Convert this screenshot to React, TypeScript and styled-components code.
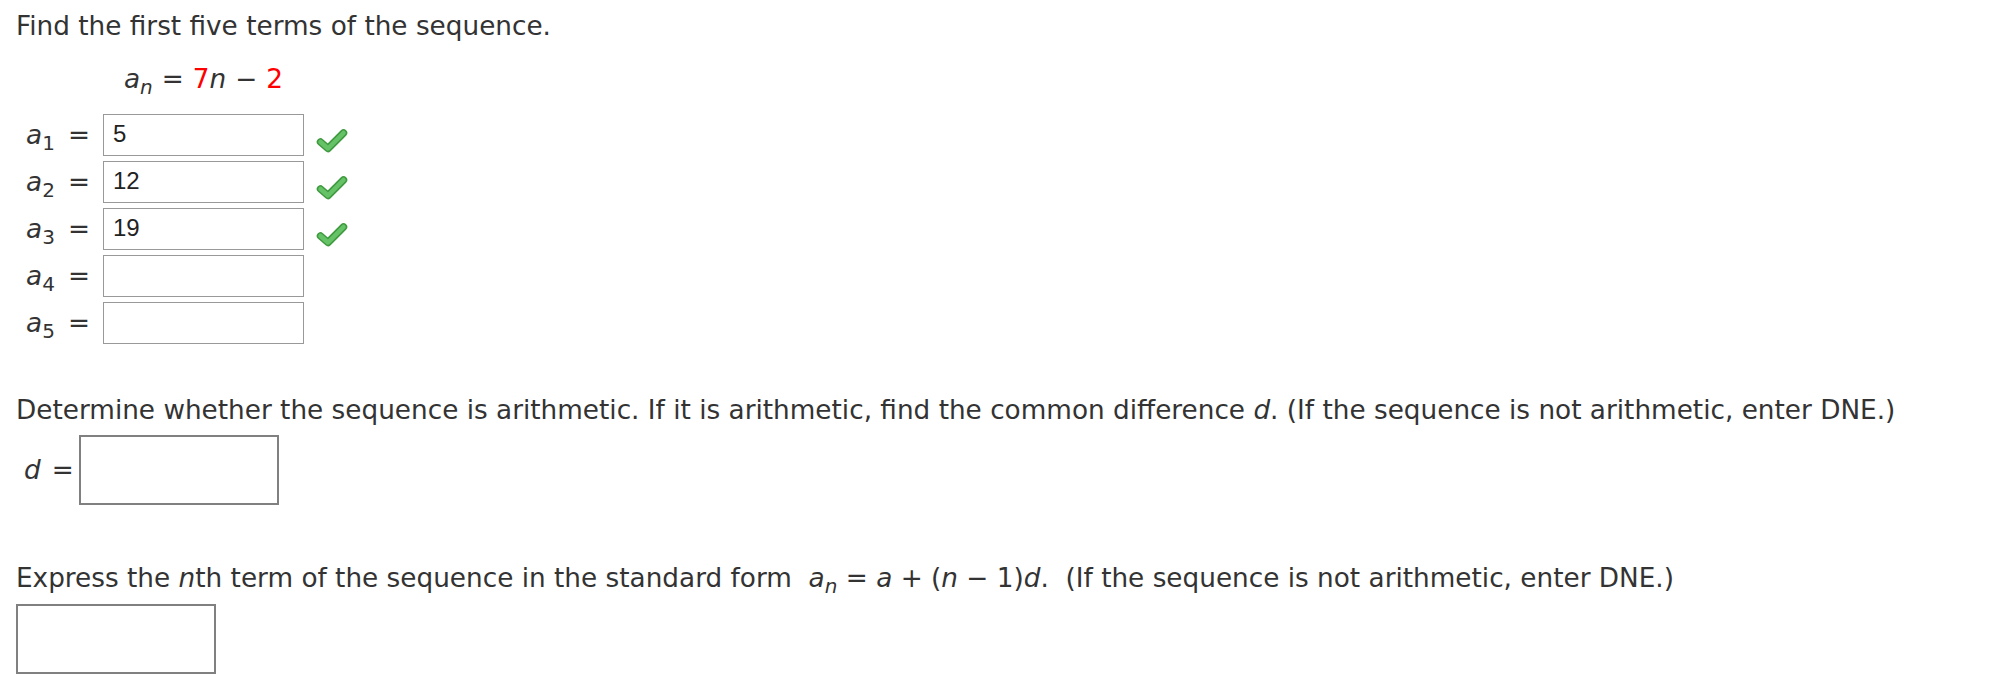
import * as React from 'react';
import styled, { createGlobalStyle } from 'styled-components';

const GlobalStyle = createGlobalStyle`
  html, body {
    margin: 0;
    padding: 0;
    background: #fff;
  }
  body {
    font-family: 'DejaVu Sans', Verdana, sans-serif;
    font-size: 26.3px;
    color: #333;
  }
`;

const Page = styled.div`
  padding: 11px 0 0 16px;
`;

const Prompt = styled.p<{ $top?: number }>`
  margin: ${(p) => p.$top ?? 0}px 0 0;
  line-height: 30px;
  white-space: pre;
`;

const V = styled.i`
  font-style: italic;
`;

const Sub = styled.sub`
  font-size: 20px;
  vertical-align: -6px;
  line-height: 0;
`;

const Red = styled.span`
  color: #f00;
`;

const Op = styled.span`
  margin: 0 9px;
`;

const TermsGrid = styled.div`
  display: grid;
  grid-template-columns: 42px 35px 201px 50px;
  row-gap: 5px;
  margin-left: 10px;
  align-items: center;
`;

const FormulaCell = styled.div`
  grid-column: 3;
  text-align: center;
  line-height: 38px;
  padding: 19px 0 11px;
  white-space: nowrap;
`;

const Label = styled.div`
  grid-column: 1;
  line-height: 42px;
  white-space: nowrap;
`;

const Eq = styled.div`
  line-height: 42px;
`;

const SmallBox = styled.div`
  box-sizing: border-box;
  height: 42px;
  border: 1px solid #999;
  padding-left: 9px;
  font-family: 'Liberation Sans', Arial, sans-serif;
  font-size: 24px;
  line-height: 38px;
  color: #222;
`;

const CheckCell = styled.div`
  padding: 9px 0 0 12px;
  height: 24px;
`;

const DRow = styled.div`
  display: flex;
  align-items: center;
  margin: 10px 0 0 8px;
`;

const DLabel = styled.span`
  margin-right: 11px;
`;

const BigBox = styled.div`
  box-sizing: border-box;
  width: 200px;
  height: 70px;
  border: 2px solid #808080;
  background: #fff;
`;

const DBox = styled(BigBox)`
  margin-left: 5px;
`;

const AnswerBox = styled(BigBox)`
  margin-top: 11px;
`;

const Check = () => (
  <svg width="32" height="25" viewBox="0 0 32 25">
    <path d="M4.5 14 L12 20.5 L27.5 5" fill="none" stroke="#3f9a3f" strokeWidth="7.5" strokeLinecap="round" strokeLinejoin="round" />
    <path d="M4.5 14 L12 20.5 L27.5 5" fill="none" stroke="#66c266" strokeWidth="4.5" strokeLinecap="round" strokeLinejoin="round" />
  </svg>
);

const terms = [
  { i: 1, value: '5', ok: true },
  { i: 2, value: '12', ok: true },
  { i: 3, value: '19', ok: true },
  { i: 4, value: '', ok: false },
  { i: 5, value: '', ok: false },
];

export default function App() {
  return (
    <Page>
      <GlobalStyle />
      <Prompt>Find the first five terms of the sequence.</Prompt>

      <TermsGrid>
        <FormulaCell>
          <V>a</V>
          <Sub>
            <V>n</V>
          </Sub>
          <Op>=</Op>
          <Red>7</Red>
          <V>n</V>
          <Op>−</Op>
          <Red>2</Red>
        </FormulaCell>
        {terms.map((t) => (
          <React.Fragment key={t.i}>
            <Label>
              <V>a</V>
              <Sub>{t.i}</Sub>
            </Label>
            <Eq>=</Eq>
            <SmallBox>{t.value}</SmallBox>
            <CheckCell>{t.ok && <Check />}</CheckCell>
          </React.Fragment>
        ))}
      </TermsGrid>

      <Prompt $top={51}>
        Determine whether the sequence is arithmetic. If it is arithmetic, find the common difference <V>d</V>. (If the
        sequence is not arithmetic, enter DNE.)
      </Prompt>
      <DRow>
        <DLabel>
          <V>d</V>
        </DLabel>
        <span>=</span>
        <DBox />
      </DRow>

      <Prompt $top={58}>
        Express the <V>n</V>th term of the sequence in the standard form{'  '}
        <V>a</V>
        <Sub>
          <V>n</V>
        </Sub>
        {' = '}
        <V>a</V>
        {' + ('}
        <V>n</V>
        {' − 1)'}
        <V>d</V>
        {'.  (If the sequence is not arithmetic, enter DNE.)'}
      </Prompt>
      <AnswerBox />
    </Page>
  );
}
